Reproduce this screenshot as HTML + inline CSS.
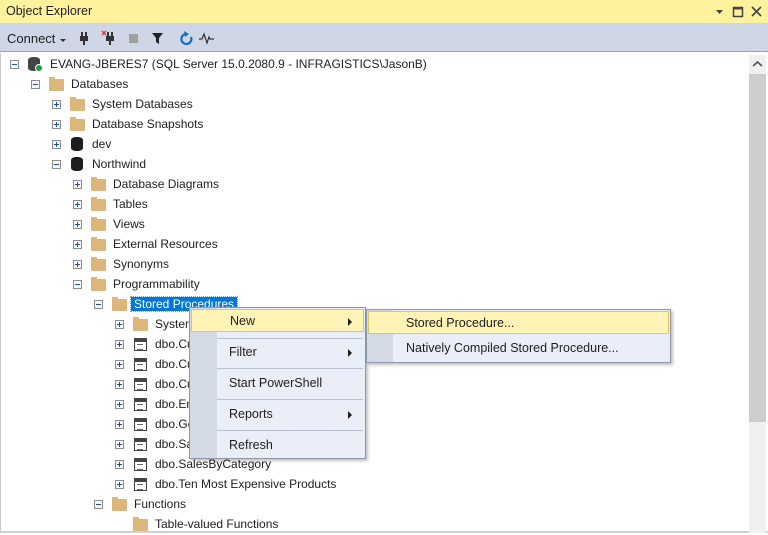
<!DOCTYPE html>
<html><head><meta charset="utf-8"><style>
*{margin:0;padding:0;box-sizing:border-box}
body{width:768px;height:535px;overflow:hidden;background:#fff;font-family:"Liberation Sans",sans-serif;font-size:12px;color:#1e1e1e;position:relative}
.title{position:absolute;left:0;top:0;width:768px;height:23px;background:#fff29d;}
.title span{position:absolute;left:6px;top:4px;font-size:12.5px}
.tb{position:absolute;left:0;top:23px;width:768px;height:29px;background:#cfd6e5;border-bottom:1px solid #9aa3b4}
.tree{position:absolute;left:0;top:53px;width:768px;height:480px;border-left:1px solid #ccc;border-bottom:2px solid #d0d0d0}
.row{position:absolute;height:20px;line-height:20px;white-space:nowrap}
.ex{position:absolute;width:9px;height:9px;border:1px solid #8c8c8c;background:#f6f6f6}
.ex:before{content:"";position:absolute;left:1px;top:3px;width:5px;height:1px;background:#1e4f9c}
.ex.p:after{content:"";position:absolute;left:3px;top:1px;width:1px;height:5px;background:#1e4f9c}
.fold{position:absolute;width:15px;height:12px;background:#dcb67a;border-radius:1px}
.fold:before{content:"";position:absolute;left:0;top:-2px;width:6px;height:3px;background:#dcb67a}
.db{position:absolute;width:12px;height:14px;background:#1e1e1e;border-radius:5px/3px}
.sp{position:absolute;width:13px;height:13px;border:1px solid #444;background:#fff}
.sp:before{content:"";position:absolute;left:0;top:0;width:11px;height:3px;background:#444}
.sp:after{content:"";position:absolute;left:2px;top:5px;width:6px;height:4px;border-top:1px solid #666;border-bottom:1px solid #666}
.sel{background:#0078d7;color:#fff;padding:0 3px;margin-left:-3px;outline:1px dotted #c88}
.scroll{position:absolute;left:749px;top:55px;width:17px;height:478px;background:#f0f0f0}
.thumb{position:absolute;left:749px;top:74px;width:17px;height:348px;background:#cdcdcd}
.menu{position:absolute;background:#e9eef8;border:1px solid #8e98ab;box-shadow:2px 2px 3px rgba(0,0,0,.25)}
.gut{position:absolute;left:0;top:0;bottom:0;background:#d4d9e6}
.mi{position:absolute;left:1px;right:1px;height:23px;line-height:22px;font-size:12.5px}
.hl{background:#fff3b5;border:1px solid #e5c365}
.sep{position:absolute;left:27px;right:2px;height:1px;background:#b9c0cf}
.arr{position:absolute;left:158px;width:0;height:0;border-top:4px solid transparent;border-bottom:4px solid transparent;border-left:4px solid #1e1e1e}
</style></head><body>
<div class="title"><span>Object Explorer</span>
<svg style="position:absolute;left:714px;top:6px" width="50" height="12"><path d="M2 4h7l-3.5 4z" fill="#444"/><rect x="19.5" y="1.5" width="9" height="9" fill="none" stroke="#444" stroke-width="1.5"/><rect x="19" y="1" width="10" height="2.5" fill="#444"/><path d="M38 1l9 9M47 1l-9 9" stroke="#444" stroke-width="1.6"/></svg></div>
<div class="tb">
<span style="position:absolute;left:7px;top:8px;font-size:13px">Connect</span>
<svg style="position:absolute;left:60px;top:6px" width="160" height="18"><path d="M0 10h6l-3 3z" fill="#333"/>
<g fill="#333"><rect x="21" y="3" width="2" height="4"/><rect x="25" y="3" width="2" height="4"/><rect x="20" y="7" width="8" height="5"/><rect x="23" y="12" width="2" height="4"/></g>
<path d="M42 2l4 4M46 2l-4 4" stroke="#d33" stroke-width="1.3"/>
<g fill="#333"><rect x="47" y="3" width="2" height="4"/><rect x="51" y="3" width="2" height="4"/><rect x="46" y="7" width="8" height="5"/><rect x="49" y="12" width="2" height="4"/></g>
<rect x="69" y="5" width="9" height="9" fill="#a0a0a0"/>
<path d="M92 4h11l-4 5v6l-3-2v-4z" fill="#222"/>
<path d="M127 5a5 5 0 1 0 4 3" fill="none" stroke="#1c6cc6" stroke-width="2.2"/><path d="M124 2l5 3-4 3z" fill="#1c6cc6"/>
<path d="M139 10h3l2-5 3 9 2-6 1 2h4" fill="none" stroke="#333" stroke-width="1.2"/></svg>
</div>
<div class="tree"></div>
<div class="scroll"></div><div class="thumb"></div>
<svg style="position:absolute;left:752px;top:60px" width="11" height="8"><path d="M1 6l4.5-4 4.5 4" fill="none" stroke="#555" stroke-width="1.6"/></svg>

<div id="rows"></div>
<script>
var R=[[0,'m','srv','EVANG-JBERES7 (SQL Server 15.0.2080.9 - INFRAGISTICS\\JasonB)'],
[1,'m','f','Databases'],[2,'p','f','System Databases'],[2,'p','f','Database Snapshots'],[2,'p','d','dev'],[2,'m','d','Northwind'],
[3,'p','f','Database Diagrams'],[3,'p','f','Tables'],[3,'p','f','Views'],[3,'p','f','External Resources'],[3,'p','f','Synonyms'],[3,'m','f','Programmability'],
[4,'m','f','Stored Procedures'],[5,'p','f','System Stored Procedures'],[5,'p','s','dbo.CustOrderHist'],[5,'p','s','dbo.CustOrdersDetail'],[5,'p','s','dbo.CustOrdersOrders'],
[5,'p','s','dbo.Employee Sales by Country'],[5,'p','s','dbo.GetCustomers'],[5,'p','s','dbo.Sales by Year'],[5,'p','s','dbo.SalesByCategory'],[5,'p','s','dbo.Ten Most Expensive Products'],
[4,'m','f','Functions'],[5,'','f','Table-valued Functions']];
var h='';
R.forEach(function(r,i){var y=54+i*20,n=r[0];
if(r[1])h+='<div class="ex '+(r[1]=='p'?'p':'')+'" style="left:'+(10+21*n)+'px;top:'+(y+6)+'px"></div>';
var ix=28+21*n;
if(r[2]=='f')h+='<div class="fold" style="left:'+(ix)+'px;top:'+(y+5)+'px"></div>';
if(r[2]=='d')h+='<div class="db" style="left:'+(ix+1)+'px;top:'+(y+3)+'px"></div>';
if(r[2]=='s')h+='<div class="sp" style="left:'+(ix+1)+'px;top:'+(y+4)+'px"></div>';
if(r[2]=='srv')h+='<div class="db" style="left:'+(ix)+'px;top:'+(y+3)+'px;background:#444"></div><div style="position:absolute;left:'+(ix+7)+'px;top:'+(y+10)+'px;width:8px;height:8px;border-radius:50%;background:#1e9e3c;border:1px solid #fff"></div>';
h+='<div class="row" style="left:'+(50+21*n)+'px;top:'+y+'px">'+(i==12?'<span class="sel">':'<span>')+r[3]+'</span></div>';});
document.getElementById('rows').innerHTML=h;
</script>

<div class="menu" style="left:189px;top:307px;width:177px;height:152px">
<div class="gut" style="width:27px"></div>
<div class="mi hl" style="top:1px"><span style="position:absolute;left:38px">New</span></div>
<div class="arr" style="top:10px"></div>
<div class="sep" style="top:30px"></div>
<div class="mi" style="top:33px"><span style="position:absolute;left:38px">Filter</span></div>
<div class="arr" style="top:41px"></div>
<div class="sep" style="top:60px"></div>
<div class="mi" style="top:64px"><span style="position:absolute;left:38px">Start PowerShell</span></div>
<div class="sep" style="top:91px"></div>
<div class="mi" style="top:95px"><span style="position:absolute;left:38px">Reports</span></div>
<div class="arr" style="top:103px"></div>
<div class="sep" style="top:122px"></div>
<div class="mi" style="top:126px"><span style="position:absolute;left:38px">Refresh</span></div>
</div>
<div class="menu" style="left:366px;top:309px;width:305px;height:54px">
<div class="gut" style="width:26px"></div>
<div class="mi hl" style="top:1px"><span style="position:absolute;left:37px">Stored Procedure...</span></div>
<div class="mi" style="top:27px"><span style="position:absolute;left:38px">Natively Compiled Stored Procedure...</span></div>
</div>
</body></html>
